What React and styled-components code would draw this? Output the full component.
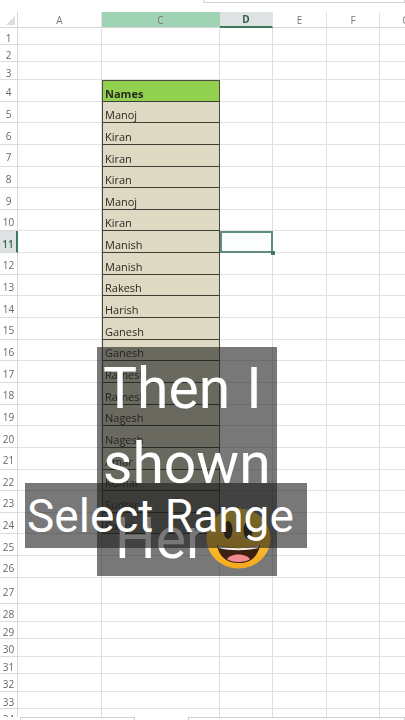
import styled, { createGlobalStyle } from "styled-components";

const GlobalStyle = createGlobalStyle`
  html, body {
    margin: 0;
    padding: 0;
    background: #fff;
  }
`;

const Page = styled.div`
  position: relative;
  width: 405px;
  height: 720px;
  overflow: hidden;
  background: #fff;
`;

const Ribbon = styled.div`
  height: 12px;
  display: flex;
  justify-content: flex-end;
`;

const FormulaBox = styled.div`
  width: 200px;
  height: 2px;
  border: 1px solid #d4d4d4;
  border-top: 0;
`;

const Sheet = styled.div`
  display: grid;
  grid-template-columns: 18px 84px 118px 53px 54px 53px 53px;
  grid-auto-rows: min-content;
  filter: blur(0.35px);
  font-family: "Open Sans", sans-serif;
`;

const ColHead = styled.div`
  height: 16px;
  display: flex;
  align-items: center;
  justify-content: center;
  font-size: 10px;
  box-sizing: border-box;
  color: ${(p) => (p.$current ? "#2f5f48" : "#777")};
  font-weight: ${(p) => (p.$current ? 700 : 400)};
  background: ${(p) => (p.$picked ? "#9fd3b3" : p.$current ? "#dfe2e3" : "#fff")};
  border-bottom: ${(p) => (p.$current ? "2px solid #3f7a5c" : "1px solid #d6d6d6")};
  border-right: 1px solid ${(p) => (p.$picked ? "#9fd3b3" : "#e2e2e2")};
`;

const Corner = styled.div`
  height: 16px;
  box-sizing: border-box;
  border-bottom: 1px solid #d6d6d6;
  border-right: 1px solid #d6d6d6;
  display: flex;
  align-items: flex-end;
  justify-content: flex-end;
  padding: 0 2px 2px 0;
`;

const CornerMark = styled.div`
  width: 0;
  height: 0;
  border-left: 9px solid transparent;
  border-bottom: 9px solid #dcdcdc;
`;

const RowHead = styled.div`
  height: ${(p) => p.$h}px;
  box-sizing: border-box;
  display: flex;
  align-items: center;
  justify-content: center;
  padding-top: 4px;
  font-size: 10px;
  color: ${(p) => (p.$current ? "#3b6a54" : "#666")};
  font-weight: ${(p) => (p.$current ? 600 : 400)};
  background: ${(p) => (p.$current ? "#dfe2e3" : "#fff")};
  border-bottom: 1px solid #dcdcdc;
  border-right: ${(p) => (p.$current ? "2px solid #3f7a5c" : "1px solid #d6d6d6")};
`;

const Cell = styled.div`
  height: ${(p) => p.$h}px;
  box-sizing: border-box;
  border-bottom: 1px solid #e2e2e2;
  border-right: 1px solid #dedede;
`;

const NameCell = styled.div`
  height: ${(p) => p.$h}px;
  box-sizing: border-box;
  display: flex;
  align-items: flex-end;
  padding: 0 0 0 2px;
  font-size: 11px;
  line-height: 14px;
  color: #2b2a22;
  font-weight: ${(p) => (p.$head ? 700 : 400)};
  background: ${(p) => (p.$head ? "#92d050" : "#ddd9c2")};
  border-left: 1px solid #4a4a42;
  border-right: 1px solid #4a4a42;
  border-bottom: 1px solid #3e3e36;
  border-top: ${(p) => (p.$head ? "1px solid #4a4a42" : "0")};
`;

const ActiveCell = styled.div`
  height: ${(p) => p.$h}px;
  box-sizing: border-box;
  position: relative;
  border: 2px solid #5f8f7a;
  background: #fbfefd;
`;

const Handle = styled.span`
  position: absolute;
  right: -4px;
  bottom: -4px;
  width: 4px;
  height: 4px;
  background: #3f7a5c;
`;

const CaptionBack = styled.div`
  position: absolute;
  left: 97px;
  top: 347px;
  width: 180px;
  height: 229px;
  background: rgba(30, 30, 30, 0.6);
  color: #fff;
  font-family: Roboto, sans-serif;
  font-size: 57px;
  line-height: 75px;
  padding-top: 4px;
  box-sizing: border-box;
`;

const CaptionLine = styled.div`
  white-space: nowrap;
  display: flex;
  align-items: center;
  gap: 1px;
  height: 75px;
  padding-left: ${(p) => p.$indent}px;
  word-spacing: ${(p) => p.$spread || 0}px;
`;

const CaptionFront = styled.div`
  position: absolute;
  left: 25px;
  top: 483px;
  width: 282px;
  height: 65px;
  background: rgba(30, 30, 30, 0.6);
  color: #fff;
  font-family: Roboto, sans-serif;
  font-size: 46px;
  line-height: 66px;
  padding-left: 2px;
  box-sizing: border-box;
  white-space: nowrap;
`;

const TabBar = styled.div`
  position: absolute;
  left: 0;
  right: 0;
  bottom: 0;
  height: 3px;
  display: flex;
  background: #fff;
`;

const Tab = styled.div`
  height: 3px;
  margin-left: ${(p) => p.$gap}px;
  width: ${(p) => p.$w}px;
  box-sizing: border-box;
  border: 1px solid #cfcfcf;
  border-bottom: 0;
`;

const Smile = () => (
  <svg width="65" height="61" viewBox="0 0 65 61" aria-hidden="true">
    <defs>
      <linearGradient id="face" x1="0" y1="0" x2="0" y2="1">
        <stop offset="0" stopColor="#fbd83f" />
        <stop offset="1" stopColor="#f6a81e" />
      </linearGradient>
    </defs>
    <ellipse cx="32.5" cy="30.5" rx="32" ry="30" fill="url(#face)" />
    <ellipse cx="22" cy="22" rx="4.5" ry="9" fill="#2d2110" />
    <ellipse cx="42" cy="22" rx="4.5" ry="9" fill="#2d2110" />
    <path d="M11 37 C22 41 43 41 54 37 C52 49 44 55 32.5 55 C21 55 13 49 11 37 Z" fill="#3d2010" />
    <path d="M12 37.5 C23 41 42 41 53 37.5 L52.4 40 C41 43 24 43 12.6 40 Z" fill="#f4efe6" />
    <path d="M21 51 C25 45 40 45 44 51 C40 55 25 55 21 51 Z" fill="#ef8a8e" />
  </svg>
);

const NAMES = [
  "Manoj", "Kiran", "Kiran", "Kiran", "Manoj", "Kiran", "Manish", "Manish", "Rakesh", "Harish",
  "Ganesh", "Ganesh", "Ramesh", "Ramesh", "Nagesh", "Nagesh", "Amar", "Kumar", "Sudhir", "Rahul",
];

const rowHeight = (n) => {
  if (n === 1 || n === 2) return 17;
  if (n === 3) return 18;
  if (n >= 4 && n <= 26) return 21.65;
  if (n === 27) return 26;
  if (n === 28) return 18;
  return 17.5;
};

const ROWS = Array.from({ length: 34 }, (_, i) => i + 1);

const App = () => (
  <Page>
    <GlobalStyle />
    <Ribbon>
      <FormulaBox />
    </Ribbon>
    <Sheet>
      <Corner>
        <CornerMark />
      </Corner>
      <ColHead>A</ColHead>
      <ColHead $picked>C</ColHead>
      <ColHead $current>D</ColHead>
      <ColHead>E</ColHead>
      <ColHead>F</ColHead>
      <ColHead>G</ColHead>
      {ROWS.map((n) => {
        const h = rowHeight(n);
        const name = n === 4 ? "Names" : NAMES[n - 5];
        return [
          <RowHead key={`h${n}`} $h={h} $current={n === 11}>
            {n}
          </RowHead>,
          <Cell key={`a${n}`} $h={h} />,
          name ? (
            <NameCell key={`c${n}`} $h={h} $head={n === 4}>
              {name}
            </NameCell>
          ) : (
            <Cell key={`c${n}`} $h={h} />
          ),
          n === 11 ? (
            <ActiveCell key={`d${n}`} $h={h}>
              <Handle />
            </ActiveCell>
          ) : (
            <Cell key={`d${n}`} $h={h} />
          ),
          <Cell key={`e${n}`} $h={h} />,
          <Cell key={`f${n}`} $h={h} />,
          <Cell key={`g${n}`} $h={h} />,
        ];
      })}
    </Sheet>
    <CaptionBack>
      <CaptionLine $indent={6} $spread={2}>Then I</CaptionLine>
      <CaptionLine $indent={6}>shown</CaptionLine>
      <CaptionLine $indent={18}>
        <span>Her</span>
        <Smile />
      </CaptionLine>
    </CaptionBack>
    <CaptionFront>Select Range</CaptionFront>
    <TabBar>
      <Tab $gap={20} $w={115} />
      <Tab $gap={53} $w={217} />
    </TabBar>
  </Page>
);

export default App;
